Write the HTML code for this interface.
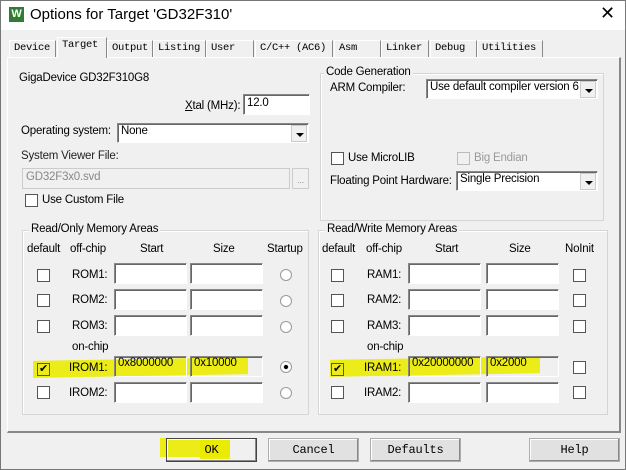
<!DOCTYPE html><html><head><meta charset="utf-8"><style>
*{box-sizing:border-box;margin:0;padding:0}
body{width:626px;height:470px;background:#f0f0f0;font-family:"Liberation Sans",sans-serif;font-size:11.5px;letter-spacing:-0.2px;color:#000;position:relative;overflow:hidden}
.a{position:absolute;white-space:nowrap}
.tab{position:absolute;top:40px;height:17px;border:1px solid #fff;border-right:1px solid #888;border-bottom:none;padding:1px 0 0 4px;font-family:"Liberation Mono",monospace;font-size:10.5px;letter-spacing:-0.3px;white-space:nowrap;overflow:hidden}
.grp{position:absolute;border:1px solid #d5d5d5;box-shadow:inset 1px 1px 0 #fff}
.gl{position:absolute;top:-8px;left:6px;background:#f0f0f0;padding:0 2px}
.tb{position:absolute;background:#fff;border:1px solid;border-color:#888 #fff #fff #888;box-shadow:inset 1px 1px 0 #666;height:21px;padding:2px 0 0 3px;overflow:hidden;white-space:nowrap}
.cb{position:absolute;width:13px;height:13px;background:#fff;border:1px solid #555}
.rd{position:absolute;width:12px;height:12px;border-radius:50%;border:1px solid #999;background:#fff}
.btn{position:absolute;top:438px;height:24px;border:1px solid #adadad;background:#e1e1e1;box-shadow:inset -1px -1px 0 #888,inset 1px 1px 0 #fff;text-align:center;line-height:22px;font-family:"Liberation Mono",monospace;font-size:12px}
.dd{position:absolute;width:16px;height:17px;top:1px;right:1px;background:#f0f0f0;border:1px solid #ccc}
.dd:after{content:"";position:absolute;left:4px;top:7px;border:4px solid transparent;border-top:4px solid #000;border-bottom:0}
.hl{position:absolute;background:rgba(235,235,0,.9)}
</style></head><body>
<div class="a" style="left:0;top:0;width:626px;height:30px;background:#fff"></div>
<div class="a" style="left:0;top:0;width:626px;height:470px;border:1px solid #777"></div>
<div class="a" style="left:9px;top:7px;width:15px;height:15px;background:#2f7d32;color:#fff;font-size:11px;font-weight:bold;text-align:center;line-height:15px">W</div>
<div class="a" style="left:30px;top:6px;font-size:15px;letter-spacing:0">Options for Target 'GD32F310'</div>
<div class="a" style="left:600px;top:3px;font-size:18px">✕</div>
<div class="a" style="left:7px;top:57px;width:614px;height:376px;border:1px solid #fff;border-right:2px solid #888;border-bottom:2px solid #888"></div>
<div class="tab" style="left:9px;width:47px">Device</div>
<div class="tab" style="left:57px;top:37px;height:21px;width:50px;background:#f0f0f0;z-index:2">Target</div>
<div class="tab" style="left:107px;width:46px">Output</div>
<div class="tab" style="left:153px;width:53px">Listing</div>
<div class="tab" style="left:206px;width:48px">User</div>
<div class="tab" style="left:255px;width:78px">C/C++ (AC6)</div>
<div class="tab" style="left:334px;width:47px">Asm</div>
<div class="tab" style="left:381px;width:48px">Linker</div>
<div class="tab" style="left:430px;width:47px">Debug</div>
<div class="tab" style="left:477px;width:66px">Utilities</div>

<div class="a" style="left:19px;top:72px">GigaDevice GD32F310G8</div>
<div class="a" style="left:185px;top:100px"><u>X</u>tal (MHz):</div>
<div class="tb" style="left:243px;top:94px;width:67px">12.0</div>
<div class="a" style="left:21px;top:125px">Operating system:</div>
<div class="tb" style="left:117px;top:123px;width:192px;height:20px;padding-top:1px">None<div class="dd"></div></div>
<div class="a" style="left:21px;top:150px;color:#222">System Viewer File:</div>
<div class="a" style="left:22px;top:168px;width:268px;height:21px;background:#f0f0f0;border:1px solid #ccc;color:#888;padding:2px 3px">GD32F3x0.svd</div>
<div class="a" style="left:292px;top:168px;width:17px;height:21px;border:1px solid #ccc;color:#999;font-size:9px;text-align:center;line-height:22px">...</div>
<div class="cb" style="left:25px;top:194px"></div>
<div class="a" style="left:42px;top:194px">Use Custom File</div>

<div class="grp" style="left:320px;top:73px;width:284px;height:148px"><span class="gl" style="left:3px">Code Generation</span></div>
<div class="a" style="left:330px;top:82px">ARM Compiler:</div>
<div class="tb" style="left:426px;top:79px;width:172px;height:20px;padding-top:1px">Use default compiler version 6<div class="dd"></div></div>
<div class="cb" style="left:331px;top:152px"></div>
<div class="a" style="left:348px;top:152px">Use MicroLIB</div>
<div class="cb" style="left:457px;top:152px;border-color:#bbb;background:#f0f0f0"></div>
<div class="a" style="left:474px;top:152px;color:#999">Big Endian</div>
<div class="a" style="left:330px;top:175px">Floating Point Hardware:</div>
<div class="tb" style="left:456px;top:171px;width:142px;height:20px;padding-top:1px">Single Precision<div class="dd"></div></div>

<div class="grp" style="left:22px;top:230px;width:287px;height:185px"><span class="gl">Read/Only Memory Areas</span></div>
<div class="grp" style="left:318px;top:230px;width:290px;height:185px"><span class="gl">Read/Write Memory Areas</span></div>

<div class="hl" style="left:33px;top:359px;width:215px;height:17px;transform:skewY(-1deg)"></div>
<div class="hl" style="left:330px;top:358px;width:210px;height:17px;transform:skewY(-1deg)"></div>
<div class="hl" style="left:160px;top:438px;width:70px;height:19px"></div>
<div class="hl" style="left:200px;top:440px;width:30px;height:19px"></div>

<div class="a" style="left:27px;top:243px">default</div>
<div class="a" style="left:70px;top:243px">off-chip</div>
<div class="a" style="left:140px;top:243px">Start</div>
<div class="a" style="left:213px;top:243px">Size</div>
<div class="a" style="left:267px;top:243px">Startup</div>
<div class="a" style="left:322px;top:243px">default</div>
<div class="a" style="left:366px;top:243px">off-chip</div>
<div class="a" style="left:435px;top:243px">Start</div>
<div class="a" style="left:509px;top:243px">Size</div>
<div class="a" style="left:565px;top:243px">NoInit</div>

<div class="a" style="left:72px;top:341px">on-chip</div>
<div class="a" style="left:367px;top:341px">on-chip</div>

<div class="cb" style="left:37px;top:269px"></div><div class="a" style="left:72px;top:269px">ROM1:</div>
<div class="tb" style="left:114px;top:263px;width:73px"></div><div class="tb" style="left:190px;top:263px;width:73px"></div><div class="rd" style="left:280px;top:269px"></div>
<div class="cb" style="left:37px;top:294px"></div><div class="a" style="left:72px;top:294px">ROM2:</div>
<div class="tb" style="left:114px;top:289px;width:73px"></div><div class="tb" style="left:190px;top:289px;width:73px"></div><div class="rd" style="left:280px;top:295px"></div>
<div class="cb" style="left:37px;top:320px"></div><div class="a" style="left:72px;top:320px">ROM3:</div>
<div class="tb" style="left:114px;top:315px;width:73px"></div><div class="tb" style="left:190px;top:315px;width:73px"></div><div class="rd" style="left:280px;top:321px"></div>
<div class="cb" style="left:37px;top:363px;background:transparent;font-size:11px;line-height:11px;text-align:center">✔</div><div class="a" style="left:69px;top:362px">IROM1:</div>
<div class="tb" style="left:114px;top:356px;width:73px;background:transparent;padding-top:0">0x8000000</div><div class="tb" style="left:190px;top:356px;width:73px;background:transparent;padding-top:0">0x10000</div><div class="rd" style="left:280px;top:361px;background:radial-gradient(#000 25%,#fff 35%)"></div>
<div class="cb" style="left:37px;top:386px"></div><div class="a" style="left:69px;top:387px">IROM2:</div>
<div class="tb" style="left:114px;top:382px;width:73px"></div><div class="tb" style="left:190px;top:382px;width:73px"></div><div class="rd" style="left:280px;top:387px"></div>

<div class="cb" style="left:331px;top:269px"></div><div class="a" style="left:367px;top:269px">RAM1:</div>
<div class="tb" style="left:408px;top:263px;width:73px"></div><div class="tb" style="left:486px;top:263px;width:73px"></div><div class="cb" style="left:573px;top:269px"></div>
<div class="cb" style="left:331px;top:294px"></div><div class="a" style="left:367px;top:294px">RAM2:</div>
<div class="tb" style="left:408px;top:289px;width:73px"></div><div class="tb" style="left:486px;top:289px;width:73px"></div><div class="cb" style="left:573px;top:294px"></div>
<div class="cb" style="left:331px;top:320px"></div><div class="a" style="left:367px;top:320px">RAM3:</div>
<div class="tb" style="left:408px;top:315px;width:73px"></div><div class="tb" style="left:486px;top:315px;width:73px"></div><div class="cb" style="left:573px;top:320px"></div>
<div class="cb" style="left:331px;top:363px;background:transparent;font-size:11px;line-height:11px;text-align:center">✔</div><div class="a" style="left:364px;top:362px">IRAM1:</div>
<div class="tb" style="left:408px;top:356px;width:73px;background:transparent;padding-top:0">0x20000000</div><div class="tb" style="left:486px;top:356px;width:73px;background:transparent;padding-top:0">0x2000</div><div class="cb" style="left:573px;top:361px"></div>
<div class="cb" style="left:331px;top:386px"></div><div class="a" style="left:364px;top:387px">IRAM2:</div>
<div class="tb" style="left:408px;top:382px;width:73px"></div><div class="tb" style="left:486px;top:382px;width:73px"></div><div class="cb" style="left:573px;top:386px"></div>

<div class="btn" style="left:166px;width:91px;background:transparent;border-color:#444">OK</div>
<div class="btn" style="left:268px;width:91px">Cancel</div>
<div class="btn" style="left:370px;width:91px">Defaults</div>
<div class="btn" style="left:529px;width:91px">Help</div>
</body></html>
